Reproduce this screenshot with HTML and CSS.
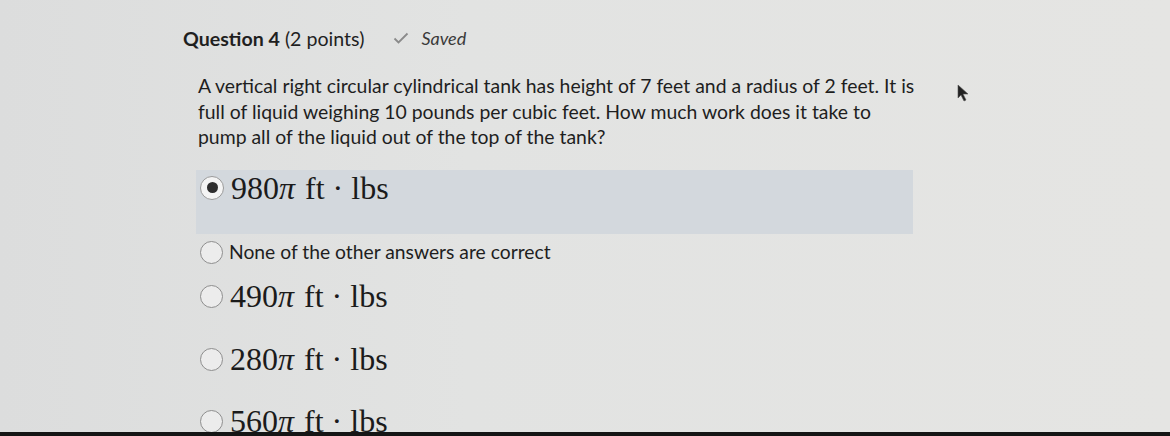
FILE: index.html
```html
<!DOCTYPE html>
<html>
<head>
<meta charset="utf-8">
<link rel="stylesheet" href="styles.css">
</head>
<body>
<div class="page">
  <div class="header">
    <span class="qtitle"><b>Question 4</b> (2 points)</span>
    <span class="saved">
      <svg class="check" width="16" height="12" viewBox="0 0 16 12"><path d="M1.5 6.5 L5.5 10.5 L14.5 1.5" fill="none" stroke="#8a8a8a" stroke-width="1.8"/></svg>
      <i>Saved</i>
    </span>
  </div>
  <div class="body">
    <p class="prompt">A vertical right circular cylindrical tank has height of 7 feet and a radius of 2 feet. It is<br>full of liquid weighing 10 pounds per cubic feet. How much work does it take to<br>pump all of the liquid out of the top of the tank?</p>
    <div class="options">
      <div class="opt opt-sel band">
        <span class="radio checked"><span class="dot"></span></span>
        <span class="math">980<i>π</i> ft · lbs</span>
      </div>
      <div class="opt short">
        <span class="radio"></span>
        <span class="plain">None of the other answers are correct</span>
      </div>
      <div class="opt tall">
        <span class="radio"></span>
        <span class="math">490<i>π</i> ft · lbs</span>
      </div>
      <div class="opt tall2">
        <span class="radio"></span>
        <span class="math">280<i>π</i> ft · lbs</span>
      </div>
      <div class="opt last">
        <span class="radio"></span>
        <span class="math">560<i>π</i> ft · lbs</span>
      </div>
    </div>
  </div>
</div>
<svg class="cursor" width="14" height="18" viewBox="0 0 14 18"><path d="M2 1 L2 14 L5 11 L8 17 L10 16 L7 10 L12 10 Z" fill="#222" stroke="#555" stroke-width="0.6"/></svg>
<div class="bezel"></div>
</body>
</html>
```
FILE: styles.css
```css
html, body {
  margin: 0;
  padding: 0;
  height: 436px;
  overflow: hidden;
}
body {
  background: linear-gradient(90deg, #dcdddd 0%, #e2e3e2 40%, #e5e5e3 100%);
  font-family: Lato, "Open Sans", sans-serif;
  color: #222;
  position: relative;
}
.page {
  padding: 25px 0 0 183px;
}
.header {
  display: flex;
  align-items: center;
  height: 26px;
}
.qtitle {
  font-size: 19.6px;
  color: #1f1f1f;
}
.qtitle b {
  font-weight: 700;
}
.saved {
  display: flex;
  align-items: center;
  margin-left: 29px;
  font-size: 18px;
  color: #3a3a3a;
}
.check {
  margin-right: 12px;
}
.body {
  padding-left: 15px;
}
.prompt {
  margin: 22px 0 0 0;
  white-space: nowrap;
  font-size: 19.4px;
  line-height: 25.5px;
  color: #1e1e1e;
}
.options {
  margin-top: 20px;
  margin-left: -2px;
  width: 717px;
}
.opt {
  display: flex;
  align-items: flex-start;
  padding-left: 4px;
}
.opt > * {
  flex: none;
}
.opt-sel {
  background: #d3d8dd;
}
.band { height: 64px; }
.tall { height: 63px; }
.tall2 { height: 62px; }
.short { height: 44px; }
.last { height: 30px; }
.radio {
  box-sizing: border-box;
  width: 23px;
  height: 23px;
  margin-top: 7px;
  border-radius: 50%;
  border: 1.5px solid #8e8e8e;
  background: #ececec;
  display: flex;
  align-items: center;
  justify-content: center;
}
.radio.checked {
  width: 24px;
  height: 24px;
  margin-top: 6px;
  border: 1.5px solid #9a9a9a;
  background: #f4f4f4;
}
.dot {
  width: 11px;
  height: 11px;
  border-radius: 50%;
  background: #2e2e2e;
}
.math {
  margin-left: 7px;
  font-family: "Liberation Serif", "DejaVu Serif", serif;
  font-size: 32px;
  line-height: 36px;
  color: #1b1b1b;
}
.math i {
  margin-right: 2px;
}
.plain {
  margin-left: 6px;
  font-size: 19.3px;
  line-height: 36px;
  color: #1e1e1e;
}
.cursor {
  position: absolute;
  left: 956px;
  top: 84px;
}
.bezel {
  position: absolute;
  left: 0;
  right: 0;
  bottom: 0;
  height: 4px;
  background: #151515;
}
```
